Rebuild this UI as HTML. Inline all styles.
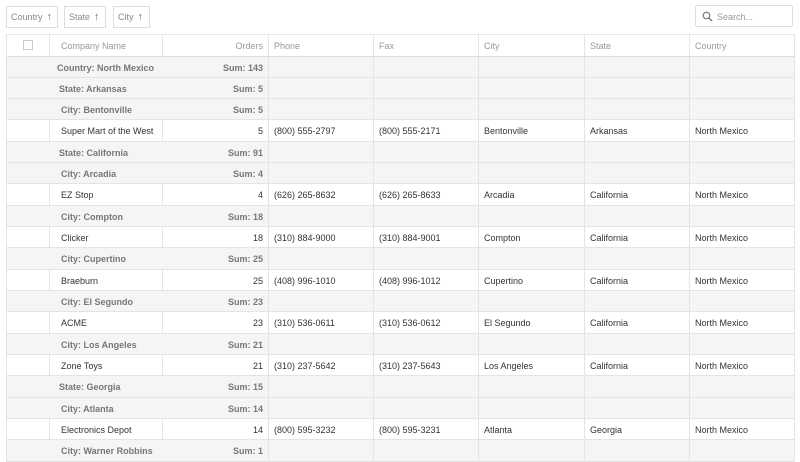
<!DOCTYPE html>
<html><head><meta charset="utf-8"><style>
*{box-sizing:border-box;margin:0;padding:0}
body{width:800px;height:450px;overflow:hidden;background:#fff;font-family:"Liberation Sans",sans-serif;font-size:9px;color:#333;position:relative}
.btn{position:absolute;top:6px;height:22px;border:1px solid #ddd;color:#888;font-size:9px;line-height:21px;padding-left:4px}
.btn span{font-size:11px;margin-left:4px;color:#777}
.search{position:absolute;left:695px;top:5px;width:98px;height:22px;border:1px solid #ddd;border-radius:2px;color:#999;line-height:22px;padding-left:21px}
.grid{position:absolute;left:6px;top:34px;width:789px;border-left:1px solid #e4e4e4;border-right:1px solid #e4e4e4;border-top:1px solid #e8e8e8}
.r{position:relative;height:21.33px;border-bottom:1px solid #e4e4e4}
.r div{position:absolute;top:0;height:100%;line-height:22px;white-space:nowrap;padding:0 5px}
.h{height:21.5px;border-bottom:1px solid #ddd;color:#999}
.g{background:#f5f5f5;color:#777;font-weight:bold}
.c0{left:0;width:42px}
.c1{left:42px;width:113px}
.c2{left:155px;width:106px;text-align:right}
.c3{left:261px;width:105px}.c4{left:366px;width:105px}.c5{left:471px;width:106px}.c6{left:577px;width:105px}.c7{left:682px;width:106px}
.d div{border-left:1px solid #e4e4e4}
.d .c0{border-left:none}
.g .c3,.g .c4,.g .c5,.g .c6,.g .c7,.h div{border-left:1px solid #e4e4e4}
.h .c0{border-left:none}
</style></head><body>
<div class="btn" style="left:6px;width:52px">Country<span>↑</span></div>
<div class="btn" style="left:64px;width:42px">State<span>↑</span></div>
<div class="btn" style="left:113px;width:37px">City<span>↑</span></div>
<div class="search"><svg style="position:absolute;left:6px;top:5px" width="11" height="11" viewBox="0 0 11 11"><circle cx="4.5" cy="4.5" r="3.3" fill="none" stroke="#777" stroke-width="1.2"/><path d="M7 7l3 3" stroke="#777" stroke-width="1.3"/></svg>Search...</div>
<div class="grid">
<div class="r h"><div class="c0"><span style="display:inline-block;width:10px;height:10px;border:1px solid #ccc;margin:5px 0 0 11px"></span></div><div class="c1" style="padding-left:11px">Company Name</div><div class="c2">Orders</div><div class="c3">Phone</div><div class="c4">Fax</div><div class="c5">City</div><div class="c6">State</div><div class="c7">Country</div></div>
<div class="r g"><div class="c1" style="padding-left:8px">Country: North Mexico</div><div class="c2">Sum: 143</div><div class="c3"></div><div class="c4"></div><div class="c5"></div><div class="c6"></div><div class="c7"></div></div>
<div class="r g"><div class="c1" style="padding-left:10px">State: Arkansas</div><div class="c2">Sum: 5</div><div class="c3"></div><div class="c4"></div><div class="c5"></div><div class="c6"></div><div class="c7"></div></div>
<div class="r g"><div class="c1" style="padding-left:12px">City: Bentonville</div><div class="c2">Sum: 5</div><div class="c3"></div><div class="c4"></div><div class="c5"></div><div class="c6"></div><div class="c7"></div></div>
<div class="r d"><div class="c0"></div><div class="c1" style="padding-left:11px">Super Mart of the West</div><div class="c2">5</div><div class="c3">(800) 555-2797</div><div class="c4">(800) 555-2171</div><div class="c5">Bentonville</div><div class="c6">Arkansas</div><div class="c7">North Mexico</div></div>
<div class="r g"><div class="c1" style="padding-left:10px">State: California</div><div class="c2">Sum: 91</div><div class="c3"></div><div class="c4"></div><div class="c5"></div><div class="c6"></div><div class="c7"></div></div>
<div class="r g"><div class="c1" style="padding-left:12px">City: Arcadia</div><div class="c2">Sum: 4</div><div class="c3"></div><div class="c4"></div><div class="c5"></div><div class="c6"></div><div class="c7"></div></div>
<div class="r d"><div class="c0"></div><div class="c1" style="padding-left:11px">EZ Stop</div><div class="c2">4</div><div class="c3">(626) 265-8632</div><div class="c4">(626) 265-8633</div><div class="c5">Arcadia</div><div class="c6">California</div><div class="c7">North Mexico</div></div>
<div class="r g"><div class="c1" style="padding-left:12px">City: Compton</div><div class="c2">Sum: 18</div><div class="c3"></div><div class="c4"></div><div class="c5"></div><div class="c6"></div><div class="c7"></div></div>
<div class="r d"><div class="c0"></div><div class="c1" style="padding-left:11px">Clicker</div><div class="c2">18</div><div class="c3">(310) 884-9000</div><div class="c4">(310) 884-9001</div><div class="c5">Compton</div><div class="c6">California</div><div class="c7">North Mexico</div></div>
<div class="r g"><div class="c1" style="padding-left:12px">City: Cupertino</div><div class="c2">Sum: 25</div><div class="c3"></div><div class="c4"></div><div class="c5"></div><div class="c6"></div><div class="c7"></div></div>
<div class="r d"><div class="c0"></div><div class="c1" style="padding-left:11px">Braeburn</div><div class="c2">25</div><div class="c3">(408) 996-1010</div><div class="c4">(408) 996-1012</div><div class="c5">Cupertino</div><div class="c6">California</div><div class="c7">North Mexico</div></div>
<div class="r g"><div class="c1" style="padding-left:12px">City: El Segundo</div><div class="c2">Sum: 23</div><div class="c3"></div><div class="c4"></div><div class="c5"></div><div class="c6"></div><div class="c7"></div></div>
<div class="r d"><div class="c0"></div><div class="c1" style="padding-left:11px">ACME</div><div class="c2">23</div><div class="c3">(310) 536-0611</div><div class="c4">(310) 536-0612</div><div class="c5">El Segundo</div><div class="c6">California</div><div class="c7">North Mexico</div></div>
<div class="r g"><div class="c1" style="padding-left:12px">City: Los Angeles</div><div class="c2">Sum: 21</div><div class="c3"></div><div class="c4"></div><div class="c5"></div><div class="c6"></div><div class="c7"></div></div>
<div class="r d"><div class="c0"></div><div class="c1" style="padding-left:11px">Zone Toys</div><div class="c2">21</div><div class="c3">(310) 237-5642</div><div class="c4">(310) 237-5643</div><div class="c5">Los Angeles</div><div class="c6">California</div><div class="c7">North Mexico</div></div>
<div class="r g"><div class="c1" style="padding-left:10px">State: Georgia</div><div class="c2">Sum: 15</div><div class="c3"></div><div class="c4"></div><div class="c5"></div><div class="c6"></div><div class="c7"></div></div>
<div class="r g"><div class="c1" style="padding-left:12px">City: Atlanta</div><div class="c2">Sum: 14</div><div class="c3"></div><div class="c4"></div><div class="c5"></div><div class="c6"></div><div class="c7"></div></div>
<div class="r d"><div class="c0"></div><div class="c1" style="padding-left:11px">Electronics Depot</div><div class="c2">14</div><div class="c3">(800) 595-3232</div><div class="c4">(800) 595-3231</div><div class="c5">Atlanta</div><div class="c6">Georgia</div><div class="c7">North Mexico</div></div>
<div class="r g"><div class="c1" style="padding-left:12px">City: Warner Robbins</div><div class="c2">Sum: 1</div><div class="c3"></div><div class="c4"></div><div class="c5"></div><div class="c6"></div><div class="c7"></div></div>
</div>
</body></html>
